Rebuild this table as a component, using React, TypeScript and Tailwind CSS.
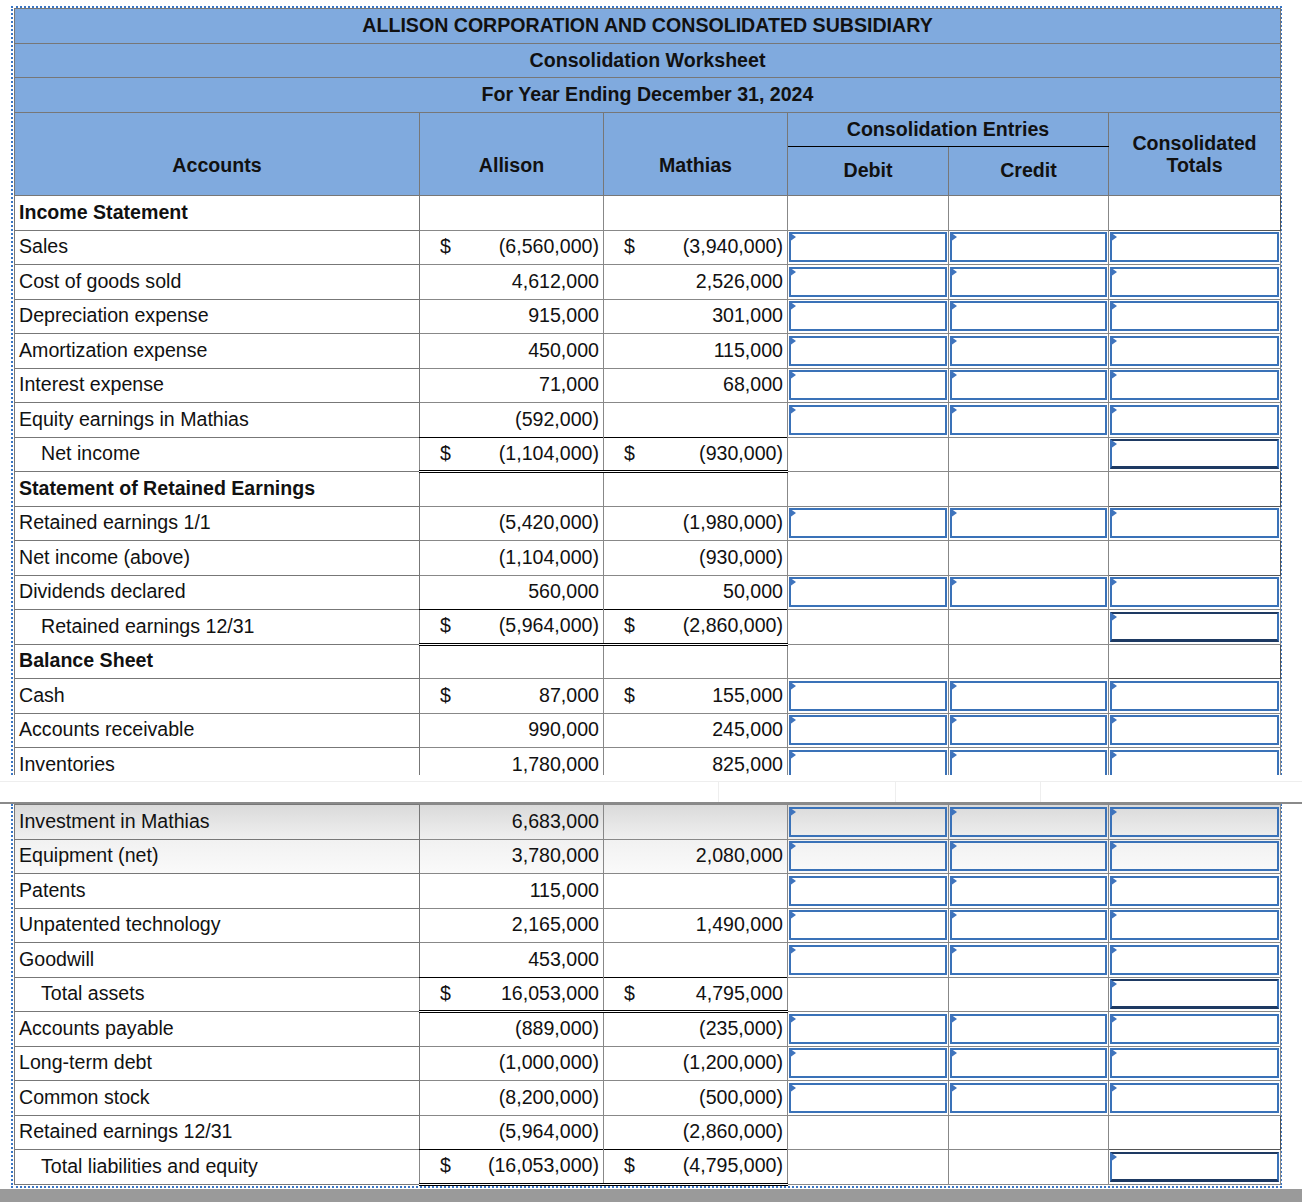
import React from "react";

type Row = {
  label: string;
  head?: boolean;
  indent?: boolean;
  a?: string;
  m?: string;
  aDollar?: boolean;
  mDollar?: boolean;
  inputs: "all" | "total" | "none";
  total?: boolean;
};

const topRows: Row[] = [
  { label: "Income Statement", head: true, inputs: "none" },
  { label: "Sales", a: "(6,560,000)", m: "(3,940,000)", aDollar: true, mDollar: true, inputs: "all" },
  { label: "Cost of goods sold", a: "4,612,000", m: "2,526,000", inputs: "all" },
  { label: "Depreciation expense", a: "915,000", m: "301,000", inputs: "all" },
  { label: "Amortization expense", a: "450,000", m: "115,000", inputs: "all" },
  { label: "Interest expense", a: "71,000", m: "68,000", inputs: "all" },
  { label: "Equity earnings in Mathias", a: "(592,000)", inputs: "all" },
  { label: "Net income", indent: true, a: "(1,104,000)", m: "(930,000)", aDollar: true, mDollar: true, inputs: "total", total: true },
  { label: "Statement of Retained Earnings", head: true, inputs: "none" },
  { label: "Retained earnings 1/1", a: "(5,420,000)", m: "(1,980,000)", inputs: "all" },
  { label: "Net income (above)", a: "(1,104,000)", m: "(930,000)", inputs: "none" },
  { label: "Dividends declared", a: "560,000", m: "50,000", inputs: "all" },
  { label: "Retained earnings 12/31", indent: true, a: "(5,964,000)", m: "(2,860,000)", aDollar: true, mDollar: true, inputs: "total", total: true },
  { label: "Balance Sheet", head: true, inputs: "none" },
  { label: "Cash", a: "87,000", m: "155,000", aDollar: true, mDollar: true, inputs: "all" },
  { label: "Accounts receivable", a: "990,000", m: "245,000", inputs: "all" },
  { label: "Inventories", a: "1,780,000", m: "825,000", inputs: "all" },
];

const bottomRows: Row[] = [
  { label: "Investment in Mathias", a: "6,683,000", inputs: "all" },
  { label: "Equipment (net)", a: "3,780,000", m: "2,080,000", inputs: "all" },
  { label: "Patents", a: "115,000", inputs: "all" },
  { label: "Unpatented technology", a: "2,165,000", m: "1,490,000", inputs: "all" },
  { label: "Goodwill", a: "453,000", inputs: "all" },
  { label: "Total assets", indent: true, a: "16,053,000", m: "4,795,000", aDollar: true, mDollar: true, inputs: "total", total: true },
  { label: "Accounts payable", a: "(889,000)", m: "(235,000)", inputs: "all" },
  { label: "Long-term debt", a: "(1,000,000)", m: "(1,200,000)", inputs: "all" },
  { label: "Common stock", a: "(8,200,000)", m: "(500,000)", inputs: "all" },
  { label: "Retained earnings 12/31", a: "(5,964,000)", m: "(2,860,000)", inputs: "none" },
  { label: "Total liabilities and equity", indent: true, a: "(16,053,000)", m: "(4,795,000)", aDollar: true, mDollar: true, inputs: "total", total: true },
];

function Cols() {
  return (
    <colgroup>
      <col className="w-[405px]" />
      <col className="w-[184px]" />
      <col className="w-[184px]" />
      <col className="w-[161px]" />
      <col className="w-[160px]" />
      <col className="w-[172px]" />
    </colgroup>
  );
}

function InputBox({ total }: { total?: boolean }) {
  return (
    <div
      className={
        total
          ? "relative h-[30px] border-2 border-[#3a72b8] border-t-[#1e3a63] border-b-[3px] border-b-[#1e3a63]"
          : "relative h-[30px] border-2 border-[#3a72b8]"
      }
    >
      <span className="absolute -left-[2px] -top-[2px] h-0 w-0 border-y-[5px] border-y-transparent border-l-[7px] border-l-[#3f74bd]" />
    </div>
  );
}

function Amount({ value, dollar, total }: { value?: string; dollar?: boolean; total?: boolean }) {
  return (
    <td
      className={
        total
          ? "border-x border-x-[#888] border-t border-t-black border-b-[3px] border-b-black border-double px-[4px]"
          : "border border-[#888] px-[4px]"
      }
    >
      <div className="flex items-center justify-between">
        <span className="pl-[16px]">{dollar ? "$" : ""}</span>
        <span>{value ?? ""}</span>
      </div>
    </td>
  );
}

function DataRow({ row, shade }: { row: Row; shade?: string }) {
  return (
    <tr className={`h-[34.5px] ${shade ?? ""}`}>
      <td
        className={`border border-[#777] ${row.indent ? "pl-[26px]" : "pl-[4px]"} ${row.head ? "font-bold" : ""}`}
      >
        {row.label}
      </td>
      <Amount value={row.a} dollar={row.aDollar} total={row.total} />
      <Amount value={row.m} dollar={row.mDollar} total={row.total} />
      {row.inputs === "all" ? (
        <>
          <td className="border border-[#888] p-[1px]"><InputBox /></td>
          <td className="border border-[#888] p-[1px]"><InputBox /></td>
          <td className="border border-[#888] p-[1px]"><InputBox /></td>
        </>
      ) : (
        <>
          <td className="border border-[#888]" />
          <td className="border border-[#888]" />
          {row.inputs === "total" ? (
            <td className="border border-[#888] p-[1px]"><InputBox total /></td>
          ) : (
            <td className="border border-[#555]" />
          )}
        </>
      )}
    </tr>
  );
}

export default function App() {
  return (
    <div className="flex h-[1202px] w-[1302px] flex-col bg-white font-['Liberation_Sans',Arial,sans-serif] text-[19.6px] leading-none text-[#111]">
      <div className="h-[775px] overflow-hidden bg-white pl-[11px] pt-[6px]">
        <div className="w-[1271px] border-2 border-b-0 border-dotted border-[#3a76c4] pl-px">
          <table className="w-[1266px] table-fixed border-collapse">
            <Cols />
            <thead className="bg-[#80aade] font-bold">
              <tr className="h-[35px]">
                <th colSpan={6} className="border border-[#777] text-center">
                  ALLISON CORPORATION AND CONSOLIDATED SUBSIDIARY
                </th>
              </tr>
              <tr className="h-[34px]">
                <th colSpan={6} className="border border-[#777] text-center">
                  Consolidation Worksheet
                </th>
              </tr>
              <tr className="h-[35px]">
                <th colSpan={6} className="border border-[#777] text-center">
                  For Year Ending December 31, 2024
                </th>
              </tr>
              <tr className="h-[34px]">
                <th rowSpan={2} className="border border-[#777] pt-[24px]">Accounts</th>
                <th rowSpan={2} className="border border-[#777] pt-[24px]">Allison</th>
                <th rowSpan={2} className="border border-[#777] pt-[24px]">Mathias</th>
                <th colSpan={2} className="border border-[#777] border-b-black">Consolidation Entries</th>
                <th rowSpan={2} className="border border-[#777] leading-[22px]">
                  Consolidated
                  <br />
                  Totals
                </th>
              </tr>
              <tr className="h-[49px]">
                <th className="border border-[#777] border-t-black">Debit</th>
                <th className="border border-[#777] border-t-black">Credit</th>
              </tr>
            </thead>
            <tbody>
              {topRows.map((r) => (
                <DataRow key={r.label} row={r} />
              ))}
            </tbody>
          </table>
        </div>
      </div>

      <div className="flex h-[29px] flex-col bg-white">
        <div className="mt-[6px] h-px bg-[#eeeeee]" />
        <div className="flex flex-1">
          <div className="w-[718px]" />
          <div className="w-[177px] border-l border-[#eeeeee]" />
          <div className="w-[145px] border-l border-[#eeeeee]" />
          <div className="flex-1 border-l border-[#eeeeee]" />
        </div>
        <div className="h-[2px] bg-[#8a8a8a]" />
      </div>

      <div className="pl-[11px]">
        <div className="w-[1271px] border-2 border-t-0 border-dotted border-[#3a76c4] pl-px">
          <table className="w-[1266px] table-fixed border-collapse">
            <Cols />
            <tbody>
              {bottomRows.map((r, i) => (
                <DataRow
                  key={r.label}
                  row={r}
                  shade={
                    i === 0
                      ? "bg-gradient-to-b from-[#dadada] to-[#f0f0f0]"
                      : i === 1
                        ? "bg-gradient-to-b from-[#f1f1f1] to-[#fafafa]"
                        : ""
                  }
                />
              ))}
            </tbody>
          </table>
        </div>
      </div>
      <div className="mt-[1px] flex-1 bg-[#9a9a9a]" />
    </div>
  );
}
